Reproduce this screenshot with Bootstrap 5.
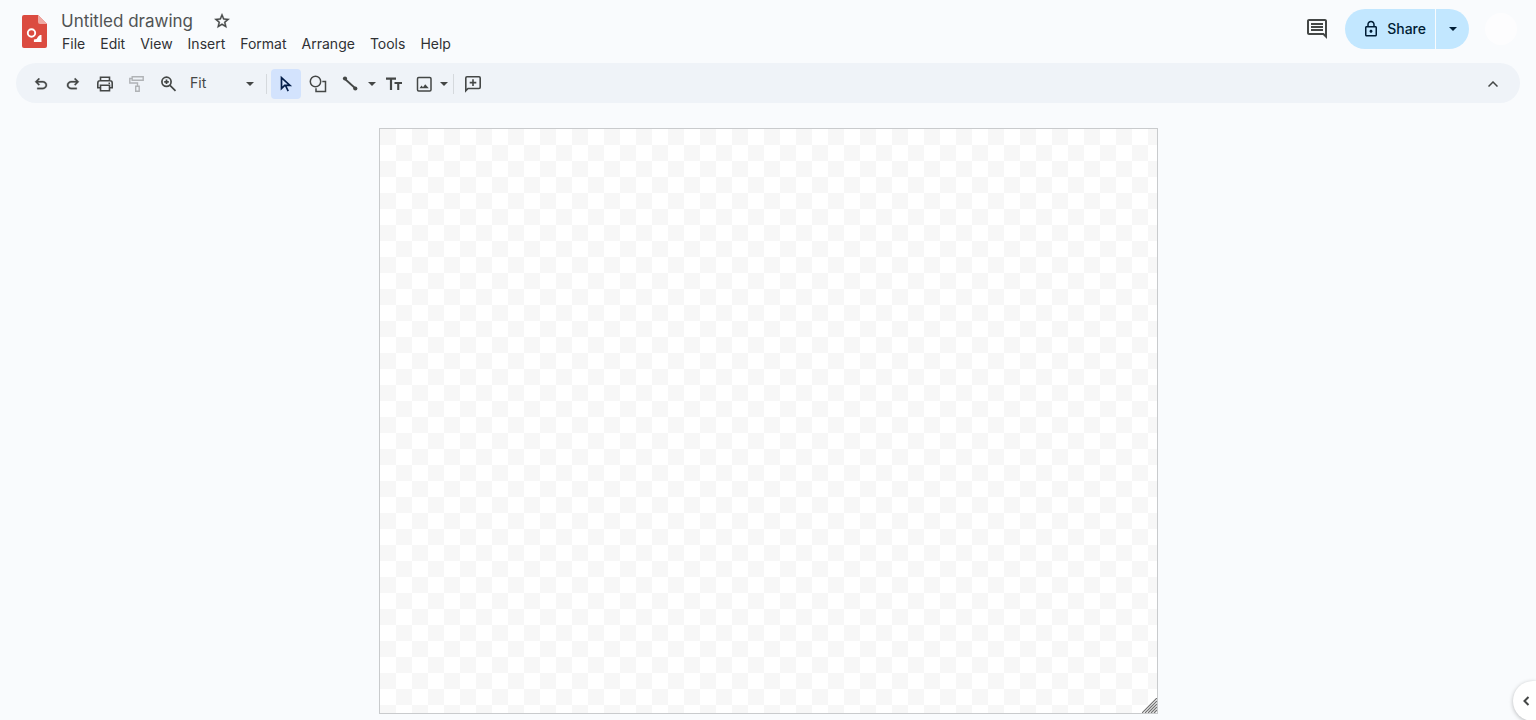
<!DOCTYPE html>
<html lang="en">
<head>
<meta charset="utf-8">
<meta name="viewport" content="width=device-width, initial-scale=1">
<title>Untitled drawing</title>
<link href="https://cdn.jsdelivr.net/npm/bootstrap@5.3.0/dist/css/bootstrap.min.css" rel="stylesheet">
<script src="https://cdn.jsdelivr.net/npm/bootstrap@5.3.0/dist/js/bootstrap.bundle.min.js" defer></script>
<style>
  body { background: #f9fbfd; color: #303134; font: 14px/20px Inter, Roboto, sans-serif; }
  svg { display: block; fill: currentColor; flex: none; }
  .line { fill: none; stroke: currentColor; }
  button { border: 0; background: transparent; color: inherit; padding: 0; }
  .app-head { height: 63px; padding: 9px 19px 0 22px; color: #444746; }
  .doc-logo { margin: 6px 14px 0 0; }
  .doc-title { width: 144px; height: 24px; padding: 0; border: 0; background: transparent; color: #505354; font: 17px/24px Inter, Roboto, sans-serif; }
  .menu-row { gap: 15px; padding: 1px 0 0 1px; color: #303134; }
  .share-btn, .share-more { background: #c2e7ff; color: #001d35; height: 40px; }
  .share-btn { padding: 0 9px 1px 17px; gap: 7px; border-radius: 20px 0 0 20px; font-weight: 500; }
  .share-more { width: 33px; border-radius: 0 20px 20px 0; }
  .split-pair { gap: 1px; }
  .avatar { width: 32px; height: 32px; background: #fdfdfe; }
  .tool-strip { height: 40px; margin: 0 16px; padding: 2px 12px 0 10px; gap: 2px; border-radius: 20px; background: #eff3f8; color: #444746; }
  .tool { width: 30px; height: 30px; display: flex; align-items: center; justify-content: center; border-radius: 4px; }
  .tool.active { background: #d3e3fd; color: #041e49; }
  .tool.slim { width: 26px; }
  .tool.drop { width: 14px; }
  .tool.drop-tight { width: 10px; }
  .tool:disabled { color: #b0b3b6; }
  .rule { width: 1px; height: 20px; margin: 0 2px; background: #d5d9dd; }
  .zoom-box { width: 76px; }
  .zoom-box select { appearance: none; width: 100%; height: 28px; padding: 0 20px 2px 4px; border: 0; background: transparent; color: #444746; }
  .zoom-box svg { position: absolute; right: 8px; top: 12px; pointer-events: none; }
  .workspace { min-height: 0; padding: 25px 0 6px 1px; }
  .sheet { height: 100%; aspect-ratio: 779 / 586; border: 1px solid #c9cbcd; background: repeating-conic-gradient(#fff 0 25%, #f7f7f7 0 50%) 0 0 / 32px 32px; }
  .grip { position: absolute; right: 0; bottom: 0; color: #707070; }
  .side-tab { position: absolute; right: 0; bottom: -1px; width: 23px; height: 40px; padding-left: 9px; border-radius: 20px 0 0 20px; background: #fff; color: #444746; box-shadow: 0 1px 4px #0004; }
</style>
</head>
<body class="d-flex flex-column vh-100 overflow-hidden position-relative">
<header class="app-head d-flex align-items-start">
  <svg class="doc-logo" width="25" height="33" viewBox="0 0 25 33" aria-hidden="true"><path fill="#db4b40" d="M2 0h14l9 9v22q0 2-2 2H2q-2 0-2-2V2q0-2 2-2z"/><path fill="#efa9a3" d="M16 0l9 9h-7q-2 0-2-2z"/><circle cx="9.500" cy="18" r="3.700" fill="none" stroke="#fff" stroke-width="1.900"/><path fill="#fff" d="M19.500 20v7h-7.600v-2.500l2.700-.5q1.500-2.800 3.400-4z"/></svg>
  <div>
    <div class="d-flex align-items-center">
      <input class="doc-title" type="text" aria-label="Rename" value="Untitled drawing">
      <button class="ms-2" aria-label="Star"><svg width="18" height="18" viewBox="0 0 24 24" stroke="currentColor" stroke-width=".5"><path d="M22 9.240l-7.190-.620L12 2 9.190 8.630 2 9.240l5.460 4.730L5.820 21 12 17.270 18.180 21l-1.630-7.030L22 9.240zM12 15.400l-3.760 2.270 1-4.280-3.320-2.880 4.380-.380L12 6.100l1.710 4.040 4.380.380-3.320 2.880 1 4.280L12 15.400z"/></svg></button>
    </div>
    <nav class="menu-row d-flex">
      <button>File</button><button>Edit</button><button>View</button><button>Insert</button><button>Format</button><button>Arrange</button><button>Tools</button><button>Help</button>
    </nav>
  </div>
  <div class="d-flex align-items-center gap-3 ms-auto">
    <button aria-label="Comments"><svg width="24" height="24" viewBox="0 0 24 24"><path d="M21.990 4c0-1.100-.890-2-1.990-2H4c-1.100 0-2 .9-2 2v12c0 1.100.9 2 2 2h14l4 4-.010-18zM20 4v13.170L18.830 16H4V4h16zM6 12h12v2H6zm0-3h12v2H6zm0-3h12v2H6z"/></svg></button>
    <div class="split-pair d-flex">
      <button class="share-btn d-flex align-items-center"><svg width="18" height="18" viewBox="0 0 24 24"><path d="M18 8h-1V6c0-2.760-2.240-5-5-5S7 3.240 7 6v2H6c-1.100 0-2 .9-2 2v10c0 1.100.9 2 2 2h12c1.100 0 2-.9 2-2V10c0-1.100-.9-2-2-2zM9 6c0-1.660 1.340-3 3-3s3 1.340 3 3v2H9V6zm9 14H6V10h12v10zm-6-3c1.100 0 2-.9 2-2s-.9-2-2-2-2 .9-2 2 .9 2 2 2z"/></svg>Share</button>
      <button class="share-more d-flex align-items-center justify-content-center" aria-label="Sharing options"><svg width="8" height="4" viewBox="0 0 8 4"><path d="M0 0h8L4 4z"/></svg></button>
    </div>
    <button class="avatar rounded-circle" aria-label="Account"></button>
  </div>
</header>

<div class="tool-strip d-flex align-items-center" role="toolbar" aria-label="Drawing tools">
  <button class="tool" aria-label="Undo"><svg width="18" height="18" viewBox="0 -960 960 960" stroke="currentColor" stroke-width="16"><path d="M280-200v-80h284q63 0 109.500-40T720-420q0-60-46.500-100T564-560H312l104 104-56 56-200-200 200-200 56 56-104 104h252q97 0 169.500 63T800-420q0 94-72.500 157T564-200H280Z"/></svg></button>
  <button class="tool" aria-label="Redo"><svg width="18" height="18" viewBox="0 -960 960 960" stroke="currentColor" stroke-width="16"><path d="M396-200q-97 0-169.500-63T154-420q0-94 72.500-157T396-640h252L544-744l56-56 200 200-200 200-56-56 104-104H396q-63 0-109.500 40T240-420q0 60 46.500 100T396-280h284v80H396Z"/></svg></button>
  <button class="tool" aria-label="Print"><svg class="line" width="18" height="18" viewBox="0 0 18 18" stroke-width="1.600"><path d="M4.500 5.500V2.300h9v3.200M4.500 12.700H1.800V8q0-2.200 2.200-2.200h10q2.200 0 2.200 2.200v4.700h-2.700M4.500 10.300h9v5.400h-9z"/><path stroke="none" fill="currentColor" d="M12.500 7.500H14V9h-1.500z"/></svg></button>
  <button class="tool" aria-label="Paint format" disabled><svg class="line" width="18" height="18" viewBox="0 0 18 18" stroke-width="1.400"><path d="M4.200 1.800h11v3.500h-11zM4.200 3.500H1.800v4.500h7.700v3M7.700 11.200h3.500v5H7.700z"/></svg></button>
  <button class="tool" aria-label="Zoom"><svg class="line" width="18" height="18" viewBox="0 0 18 18" stroke-width="1.700"><circle cx="6.500" cy="6.800" r="4.600"/><path d="M10 10.300l5.500 5.500M6.500 4.500v4.600M4.200 6.800h4.600"/></svg></button>
  <div class="zoom-box position-relative"><select aria-label="Zoom level"><option>Fit</option><option>50%</option><option>100%</option><option>200%</option></select><svg width="8" height="4" viewBox="0 0 8 4"><path d="M0 0h8L4 4z"/></svg></div>
  <div class="rule"></div>
  <button class="tool active" aria-label="Select"><svg class="line" width="18" height="18" viewBox="0 0 18 18" stroke-width="1.700"><path d="M4.500 2.700v10.800l3.200-3.200h5.200zM8.500 10.500l2.700 5.600"/></svg></button>
  <button class="tool" aria-label="Shape"><svg class="line" width="18" height="18" viewBox="0 0 18 18" stroke-width="1.500"><circle cx="6.500" cy="6.500" r="5.200"/><path d="M13.300 6.500h3.200v10H7v-3.200"/></svg></button>
  <div class="d-flex">
    <button class="tool" aria-label="Line"><svg class="line" width="18" height="18" viewBox="0 0 18 18" stroke-width="1.800"><path d="M4 4l10.500 9.500"/><circle cx="4" cy="3.500" r="2.100" fill="currentColor" stroke="none"/><circle cx="14.300" cy="13.500" r="2.100" fill="currentColor" stroke="none"/></svg></button>
    <button class="tool drop" aria-label="Line options"><svg width="8" height="4" viewBox="0 0 8 4"><path d="M0 0h8L4 4z"/></svg></button>
  </div>
  <button class="tool slim" aria-label="Text box"><svg width="18" height="18" viewBox="0 0 18 18"><path d="M1 2.500h10v2.200H7.100V15H4.900V4.700H1zM9.500 7H17v2h-2.700v6h-2.100V9H9.500z"/></svg></button>
  <div class="d-flex">
    <button class="tool" aria-label="Image"><svg width="18" height="18" viewBox="0 0 18 18"><rect class="line" x="2.500" y="2.500" width="13.500" height="13.500" rx="1.200" stroke-width="1.500"/><path d="M4.500 13.200l2-2.800 1.500 1.800 2.200-3 3.600 4z"/></svg></button>
    <button class="tool drop-tight" aria-label="Image options"><svg width="8" height="4" viewBox="0 0 8 4"><path d="M0 0h8L4 4z"/></svg></button>
  </div>
  <div class="rule"></div>
  <button class="tool" aria-label="Add comment"><svg class="line" width="18" height="18" viewBox="0 0 18 18" stroke-width="1.600"><path d="M1.800 15.800V3q0-1.200 1.200-1.200h12q1.200 0 1.200 1.200v9.300q0 1.200-1.200 1.200H4zM9 4.300v6.600M5.700 7.600h6.600"/></svg></button>
  <button class="tool ms-auto" aria-label="Hide the menus"><svg class="line" width="10" height="6" viewBox="0 0 10 6" stroke-width="1.500"><path d="M.5 5.500L5 1l4.500 4.500"/></svg></button>
</div>

<main class="workspace d-flex justify-content-center flex-grow-1">
  <div class="sheet position-relative">
    <svg class="grip line" width="15" height="15" viewBox="0 0 15 15" stroke-width="1.200"><path d="M0 15L15 0M3 15L15 3M6 15L15 6M9 15l6-6M12 15l3-3"/></svg>
  </div>
</main>
<button class="side-tab" aria-label="Show side panel"><svg class="line" width="8" height="10" viewBox="0 0 8 10" stroke-width="2"><path d="M6.500 1l-4 4 4 4"/></svg></button>
</body>
</html>
